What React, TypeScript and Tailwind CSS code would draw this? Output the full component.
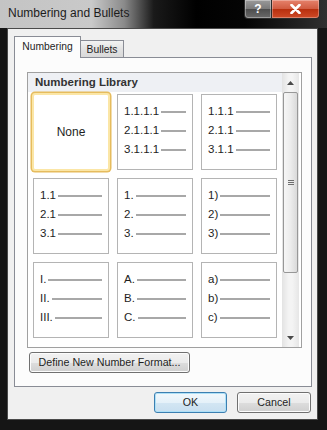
import React from "react";

const cells: (string[] | null)[] = [
  null,
  ["1.1.1.1", "2.1.1.1", "3.1.1.1"],
  ["1.1.1", "2.1.1", "3.1.1"],
  ["1.1", "2.1", "3.1"],
  ["1.", "2.", "3."],
  ["1)", "2)", "3)"],
  ["I.", "II.", "III."],
  ["A.", "B.", "C."],
  ["a)", "b)", "c)"],
];

function Cell({ items }: { items: string[] | null }) {
  if (!items) {
    return (
      <div className="h-[76px] w-[76px] rounded-[2px] border border-[#fbe6a6] bg-white shadow-[0_0_0_1px_#fbe6a6,0_0_0_2.5px_#e6bc5e] flex items-center justify-center text-[12px] text-[#1e1e1e]">
        None
      </div>
    );
  }
  return (
    <div className="h-[76px] w-[76px] border border-[#b4b4b4] bg-white pl-[6px] pr-[6px] pt-[7px] flex flex-col">
      {items.map((t) => (
        <div key={t} className="h-[19px] flex items-center text-[11.5px] text-[#1e1e1e] leading-none">
          <span>{t}</span>
          <div className="ml-[2px] h-[2px] flex-1 bg-[#a8a8a8]" />
        </div>
      ))}
    </div>
  );
}

function Scrollbar() {
  return (
    <div className="w-[17px] flex flex-col bg-[linear-gradient(90deg,#e3e3e3,#f4f4f4_40%,#f4f4f4_60%,#e6e6e6)]">
      <div className="h-[19px] flex items-center justify-center">
        <svg width="7" height="4" viewBox="0 0 7 4">
          <path d="M0 4 L3.5 0 L7 4 Z" fill="#4a4a4a" />
        </svg>
      </div>
      <div className="mx-[1px] h-[181px] rounded-[2px] border border-[#979797] bg-[linear-gradient(90deg,#f6f6f6,#ececec_50%,#d9d9d9)] flex items-center justify-center">
        <div className="flex flex-col gap-[1px]">
          <div className="h-px w-[6px] bg-[#6e6e6e]" />
          <div className="h-px w-[6px] bg-[#6e6e6e]" />
          <div className="h-px w-[6px] bg-[#6e6e6e]" />
        </div>
      </div>
      <div className="flex-1" />
      <div className="h-[19px] flex items-center justify-center">
        <svg width="7" height="4" viewBox="0 0 7 4">
          <path d="M0 0 L3.5 4 L7 0 Z" fill="#4a4a4a" />
        </svg>
      </div>
    </div>
  );
}

function WinButton({ children, def, w }: { children: React.ReactNode; def?: boolean; w: string }) {
  return (
    <div
      className={
        "h-[21px] rounded-[3px] border flex items-center justify-center text-[10.7px] text-[#1e1e1e] " +
        w +
        " " +
        (def
          ? "border-[#3c7fb1] bg-[linear-gradient(180deg,#f2f8fc_0%,#e5f1f9_50%,#d3e6f3_51%,#c8dff0_100%)] shadow-[inset_0_0_0_1px_#aee0f7]"
          : "border-[#707070] bg-[linear-gradient(180deg,#f2f2f2_0%,#ebebeb_50%,#dddddd_51%,#cfcfcf_100%)] shadow-[inset_0_0_0_1px_#fcfcfc]")
      }
    >
      {children}
    </div>
  );
}

export default function App() {
  return (
    <div
      className="w-[327px] h-[430px] bg-[#151515] flex flex-col overflow-hidden"
      style={{ fontFamily: '"Liberation Sans", Arial, sans-serif' }}
    >
      {/* Title bar */}
      <div className="h-[28px] flex items-start bg-[linear-gradient(90deg,#c4c4c4_0%,#c9c9c9_28%,#8a8a8a_38%,#1a1a1a_47%,#000_60%,#050505_75%,#303030_100%)]">
        <div className="pl-[8px] pt-[7px] text-[12px] text-[#1c1c1c] leading-none">Numbering and Bullets</div>
        <div className="ml-auto mr-[7px] flex h-[19px]">
          <div className="w-[28px] h-[19px] rounded-bl-[4px] border border-t-0 border-[#2c2c2c] bg-[linear-gradient(180deg,#9a9a9a_0%,#7a7a7a_50%,#4e4e4e_52%,#6a6a6a_100%)] shadow-[inset_0_0_0_1px_rgba(255,255,255,0.35)] flex items-center justify-center text-white font-bold text-[12px]">
            ?
          </div>
          <div className="w-[48px] h-[19px] rounded-br-[4px] border border-t-0 border-l-0 border-[#2c2c2c] bg-[linear-gradient(180deg,#e6826c_0%,#d05a40_50%,#b8300f_52%,#cf4a27_100%)] shadow-[inset_0_0_0_1px_rgba(255,255,255,0.3)] flex items-center justify-center">
            <svg width="11" height="10" viewBox="0 0 11 10">
              <path d="M1.5 1 L9.5 9 M9.5 1 L1.5 9" stroke="#fff" strokeWidth="2.6" strokeLinecap="round" />
            </svg>
          </div>
        </div>
      </div>

      {/* Client area */}
      <div className="ml-[7px] w-[311px] h-[392px] bg-[#f0f0f0] border border-[#4a4a4a] flex flex-col px-[6px] pt-[8px]">
        {/* Tabs */}
        <div className="flex items-end h-[21px] -mb-px relative z-10">
          <div className="h-[22px] w-[67px] border border-b-0 border-[#898c95] bg-[#fcfcfc] flex items-center justify-center text-[10.3px] text-[#1e1e1e] pb-[2px]">
            Numbering
          </div>
          <div className="h-[18px] w-[43px] border border-l-0 border-[#898c95] bg-[linear-gradient(180deg,#f3f3f3,#e2e2e2_50%,#d9d9d9)] flex items-center justify-center text-[10.3px] text-[#1e1e1e] pt-[2px]">
            Bullets
          </div>
        </div>

        {/* Panel */}
        <div className="w-[298px] h-[330px] border border-[#898c95] bg-[#fcfcfc] pl-[12px] pt-[14px] flex flex-col">
          <div className="w-[275px] h-[276px] border border-[#a0a0a0] bg-white flex">
            <div className="w-[254px] flex flex-col">
              <div className="h-[19px] bg-[#eef0f4] flex items-center pl-[7px] text-[11.5px] font-bold text-[#333]">
                Numbering Library
              </div>
              <div className="pl-[5px] pt-[2px] grid grid-cols-[76px_76px_76px] auto-rows-[76px] gap-[8px]">
                {cells.map((c, i) => (
                  <Cell key={i} items={c} />
                ))}
              </div>
            </div>
            <Scrollbar />
          </div>
          <div className="ml-[2px] mt-[4px]">
            <WinButton w="w-[161px]">Define New Number Format...</WinButton>
          </div>
        </div>

        {/* Bottom buttons */}
        <div className="mt-[5px] flex justify-end gap-[10px] pr-[0px]">
          <WinButton def w="w-[73px]">OK</WinButton>
          <WinButton w="w-[74px]">Cancel</WinButton>
        </div>
      </div>
    </div>
  );
}
